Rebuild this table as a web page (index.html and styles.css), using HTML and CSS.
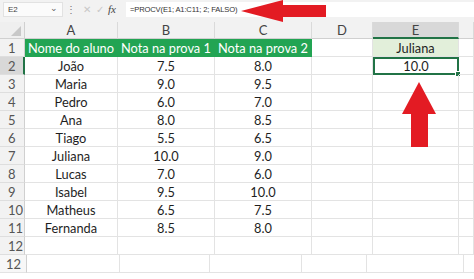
FILE: index.html
```html
<!DOCTYPE html>
<html lang="pt">
<head>
<meta charset="utf-8">
<link rel="stylesheet" href="styles.css">
</head>
<body>
<div class="app">
  <div class="fbar">
    <div class="namebox"><span>E2</span><span class="chev">&#8964;</span></div>
    <span class="dots">&#8942;</span>
    <span class="ico x">&#10005;</span>
    <span class="ico ok">&#10003;</span>
    <span class="fx">fx</span>
    <div class="formula">=PROCV(E1; A1:C11; 2; FALSO)</div>
  </div>
  <div class="sheet">
    <div class="corner"><span class="tri"></span></div>
    <div class="ch">A</div><div class="ch">B</div><div class="ch">C</div><div class="ch">D</div><div class="ch sel">E</div><div class="ch"></div>

    <div class="rh">1</div><div class="c g">Nome do aluno</div><div class="c g">Nota na prova 1</div><div class="c g">Nota na prova 2</div><div class="c"></div><div class="c lg">Juliana</div><div class="c"></div>
    <div class="rh rsel">2</div><div class="c">João</div><div class="c">7.5</div><div class="c">8.0</div><div class="c"></div><div class="c act">10.0<span class="handle"></span></div><div class="c"></div>
    <div class="rh">3</div><div class="c">Maria</div><div class="c">9.0</div><div class="c">9.5</div><div class="c"></div><div class="c"></div><div class="c"></div>
    <div class="rh">4</div><div class="c">Pedro</div><div class="c">6.0</div><div class="c">7.0</div><div class="c"></div><div class="c"></div><div class="c"></div>
    <div class="rh">5</div><div class="c">Ana</div><div class="c">8.0</div><div class="c">8.5</div><div class="c"></div><div class="c"></div><div class="c"></div>
    <div class="rh">6</div><div class="c">Tiago</div><div class="c">5.5</div><div class="c">6.5</div><div class="c"></div><div class="c"></div><div class="c"></div>
    <div class="rh">7</div><div class="c">Juliana</div><div class="c">10.0</div><div class="c">9.0</div><div class="c"></div><div class="c"></div><div class="c"></div>
    <div class="rh">8</div><div class="c">Lucas</div><div class="c">7.0</div><div class="c">6.0</div><div class="c"></div><div class="c"></div><div class="c"></div>
    <div class="rh">9</div><div class="c">Isabel</div><div class="c">9.5</div><div class="c">10.0</div><div class="c"></div><div class="c"></div><div class="c"></div>
    <div class="rh">10</div><div class="c">Matheus</div><div class="c">6.5</div><div class="c">7.5</div><div class="c"></div><div class="c"></div><div class="c"></div>
    <div class="rh">11</div><div class="c">Fernanda</div><div class="c">8.5</div><div class="c">8.0</div><div class="c"></div><div class="c"></div><div class="c"></div>
    <div class="rh">12</div><div class="c"></div><div class="c"></div><div class="c"></div><div class="c"></div><div class="c"></div><div class="c"></div>
  </div>
  <div class="glitch">
    <div class="grh">12</div><div class="gc w1"></div><div class="gc w2"></div><div class="gc w3"></div><div class="gc w4"></div><div class="gc w5"></div><div class="gc w6"></div>
  </div>
  <svg class="arrows" width="474" height="279" viewBox="0 0 474 279">
    <polygon points="241,11 283,0 283,5 326,5 326,17 283,17 283,22" fill="#e31b23"/>
    <polygon points="419,82 436,114 428,114 428,147 411,147 411,114 402,114" fill="#e31b23"/>
  </svg>
</div>
</body>
</html>
```
FILE: styles.css
```css
html, body { margin: 0; padding: 0; background: #fff; }
body { font-family: Lato, "Open Sans", "Liberation Sans", sans-serif; color: #222; }
.app { position: relative; width: 474px; height: 279px; overflow: hidden; }

.fbar { height: 22px; background: #f2f2f2; display: flex; align-items: flex-start; padding-top: 2px; box-sizing: border-box; }
.namebox { margin-left: 3px; width: 60px; height: 15px; background: #fbfbfb; border: 1px solid #e2e2e2; box-sizing: border-box; display: flex; align-items: center; justify-content: space-between; padding: 0 4px 0 4px; font-size: 8px; color: #444; font-family: "Liberation Sans", sans-serif; }
.chev { font-size: 9px; color: #666; line-height: 6px; height: 9px; }
.dots { width: 14px; text-align: center; font-size: 10px; color: #777; line-height: 15px; margin-left: 1px; }
.ico { width: 13px; text-align: center; font-size: 10px; color: #c8c8c8; line-height: 15px; }
.x { margin-left: 2px; }
.fx { width: 14px; font-family: "Liberation Serif", serif; font-style: italic; font-size: 11px; color: #444; line-height: 15px; margin-left: 2px; }
.formula { margin-left: 4px; flex: 1; height: 15px; background: #fff; font-family: "Liberation Sans", sans-serif; font-size: 7.6px; color: #333; line-height: 15px; padding-left: 4px; letter-spacing: -0.15px; }

.sheet { display: grid; grid-template-columns: 25px 93px 97px 97px 61px 86px 1fr; grid-template-rows: 17px repeat(12, 18px); }
.sheet > div { box-sizing: border-box; }
.corner { background: #efefef; border-right: 1px solid #d0d0d0; border-bottom: 1px solid #d0d0d0; position: relative; }
.tri { position: absolute; right: 3px; bottom: 2px; width: 0; height: 0; border-left: 10px solid transparent; border-bottom: 10px solid #c8c8c8; }
.ch { background: #f2f2f2; border-right: 1px solid #dadada; border-bottom: 1px solid #d0d0d0; display: flex; align-items: center; justify-content: center; font-size: 13px; color: #444; }
.ch.sel { background: #d8d8d8; border-bottom: 2px solid #217346; }
.rh { background: #f2f2f2; border-right: 1px solid #d0d0d0; border-bottom: 1px solid #dedede; font-size: 13px; color: #555; display: flex; align-items: center; padding-left: 8px; }
.rh.rsel { background: #d8d8d8; border-right: 2px solid #217346; }
.c { border-right: 1px solid #e3e3e3; border-bottom: 1px solid #e3e3e3; font-size: 12.8px; display: flex; align-items: center; justify-content: center; color: #1e1e1e; position: relative; }
.c.g { background: #22a453; color: #fff; border-color: #22a453; }
.c.lg { background: #e2efda; }
.c.act { border: 2px solid #217346; }
.handle { position: absolute; right: -4px; bottom: -4px; width: 4px; height: 4px; background: #217346; border: 1px solid #fff; }

.glitch { display: flex; height: 18px; }
.glitch > div { box-sizing: border-box; height: 18px; border-bottom: 1px solid #e3e3e3; }
.grh { width: 27px; background: #f7f7f7; border-right: 1px solid #d0d0d0; font-size: 13px; color: #555; padding-left: 6px; line-height: 18px; }
.gc { border-right: 1px solid #e3e3e3; }
.w1 { width: 93px; } .w2 { width: 90px; } .w3 { width: 92px; } .w4 { width: 65px; } .w5 { width: 97px; } .w6 { flex: 1; border-right: none; }

.arrows { position: absolute; left: 0; top: 0; pointer-events: none; }
```
